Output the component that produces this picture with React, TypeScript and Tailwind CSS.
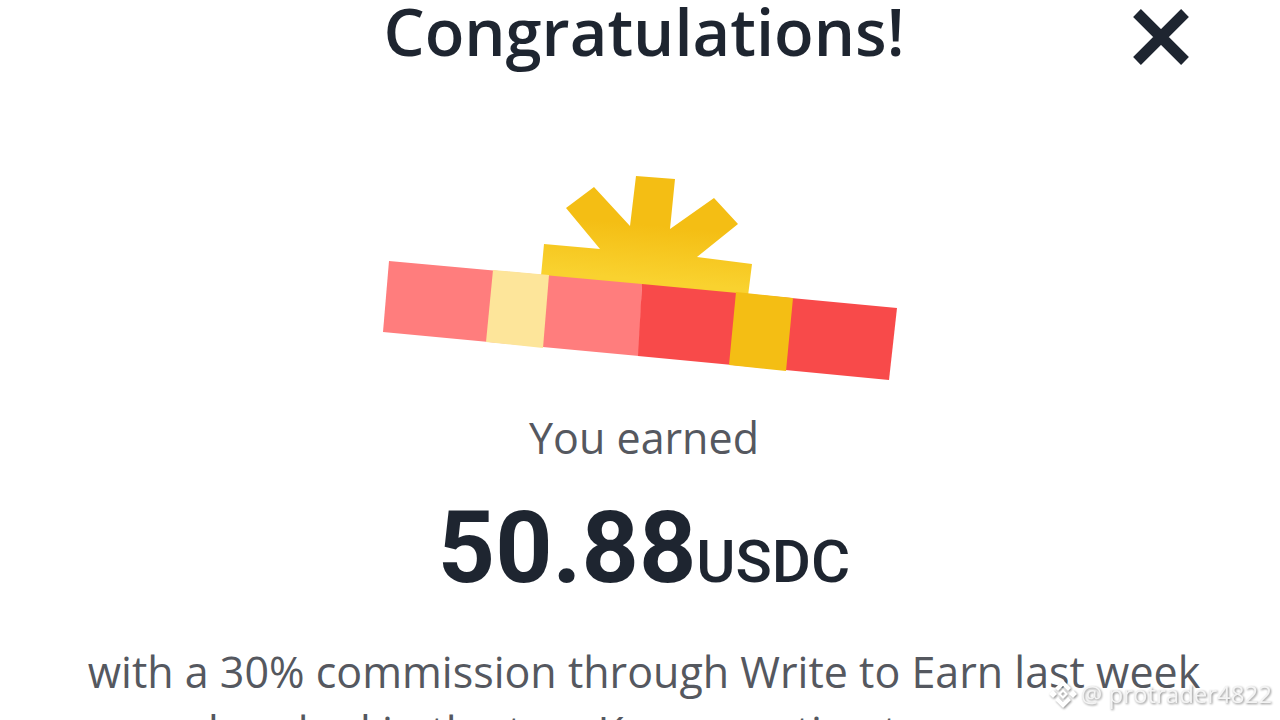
import { useState } from "react";

function GiftIllustration() {
  return (
    <svg viewBox="380 170 520 214" className="w-[520px] h-[214px]" role="img" aria-label="Gift box">
      <defs>
        <linearGradient id="bow" gradientUnits="userSpaceOnUse" x1="650" y1="225" x2="645" y2="280">
          <stop offset="0" stopColor="#f4be14" />
          <stop offset="1" stopColor="#f9d22f" />
        </linearGradient>
      </defs>
      <path
        d="M544 244L600 249L566 208L594 187L630 226L636 176L675 179L670 229L714 198L738 224L697 257L752 264L748 296L541 276Z"
        fill="url(#bow)"
      />
      <path d="M389 261L642 284L639 356L383 332Z" fill="#ff7d7d" />
      <path d="M642 284L897 308L889 380L638 356Z" fill="#f84a4a" />
      <path d="M493 270L549 275L543 348L486 342Z" fill="#fde59a" />
      <path d="M736 292L793 298L786 371L729 365Z" fill="#f4be14" />
    </svg>
  );
}

function DiamondLogo() {
  return (
    <svg viewBox="0 0 28 28" className="w-7 h-7" fill="white" aria-hidden="true">
      <path d="M14 0L22 8L19 11L14 6L9 11L6 8Z" />
      <path d="M4 10L8 14L4 18L0 14Z" />
      <path d="M24 10L28 14L24 18L20 14Z" />
      <path fillRule="evenodd" d="M14 9L19 14L14 19L9 14ZM14 12L12 14L14 16L16 14Z" />
      <path d="M9 17L14 22L19 17L22 20L14 28L6 20Z" />
    </svg>
  );
}

export default function App() {
  const [open, setOpen] = useState(true);

  if (!open) return null;

  return (
    <main className="relative h-screen overflow-hidden bg-white font-['Open_Sans','Noto_Sans',sans-serif] text-[#1e2530]">
      <header className="grid grid-cols-[1fr_auto_1fr] items-start pl-2">
        <h1 className="col-start-2 text-[65px] leading-[62px] font-semibold">Congratulations!</h1>
        <button
          type="button"
          aria-label="Close"
          onClick={() => setOpen(false)}
          className="justify-self-end mr-[90px] pt-2 cursor-pointer"
        >
          <svg viewBox="0 0 58 58" className="w-[58px] h-[58px]" stroke="#1e2530" strokeWidth="11" aria-hidden="true">
            <path d="M5 5L53 53M53 5L5 53" />
          </svg>
        </button>
      </header>

      <section className="flex flex-col items-center pt-[104px]">
        <GiftIllustration />
        <p className="mt-6 pl-2 text-[43px] leading-[60px] text-[#55585f]">You earned</p>
        <p className="mt-6 flex items-baseline pl-2 font-['Roboto',sans-serif] leading-[112px]">
          <span className="text-[100px] font-bold">50.88</span>
          <span className="text-[60px] font-medium">USDC</span>
        </p>
        <p className="mt-6 pl-2 text-center whitespace-nowrap text-[43px] leading-[60px] text-[#55585f]">
          with a 30% commission through Write to Earn last week
          <br />
          and ranked in the top. Keep creating to earn more
        </p>
      </section>

      <div className="absolute right-2 bottom-2.5 flex items-center gap-1 text-2xl leading-8 text-[#f4f4f4] [filter:drop-shadow(1px_1px_1px_rgba(0,0,0,0.45))]">
        <DiamondLogo />
        <span>@ protrader4822</span>
      </div>
    </main>
  );
}
